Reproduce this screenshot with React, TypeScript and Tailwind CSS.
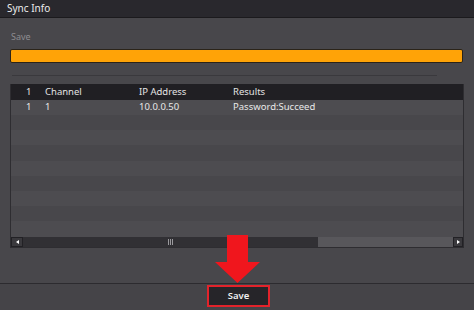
import React from 'react';

const rows = [
  { idx: '1', channel: '1', ip: '10.0.0.50', result: 'Password:Succeed' },
];

const EMPTY_ROWS = 8;

export default function App() {
  return (
    <div
      className="relative w-[474px] h-[310px] bg-[#48474b] flex flex-col overflow-hidden"
      style={{ fontFamily: '"Noto Sans", "Open Sans", sans-serif' }}
    >
      {/* title bar */}
      <div className="h-[18px] bg-[#29282d] border-b border-[#1b1a1d] pl-[7px] text-[10px] leading-[17px] text-[#ececec]">
        Sync Info
      </div>

      <div className="flex-1 flex flex-col px-[10px]">
        <div className="mt-[12px] h-[13px] pl-[1px] text-[9px] leading-[13px] text-[#8e8d91]">Save</div>

        {/* progress */}
        <div className="mt-[6px] w-[453px] h-[14px] rounded-[2px] border border-[#2b2419] bg-[#ffa307]" />

        <div className="mt-[12px] ml-[2px] w-[425px] h-px bg-[#3a393d]" />

        {/* table */}
        <div className="mt-[8px] w-[454px] border-x border-b border-[#2e2d31] flex flex-col">
          <div className="h-[16px] bg-[#201f23] flex items-center text-[9.5px] text-[#e4e4e4]">
            <span className="w-[34px] pl-[15px]">1</span>
            <span className="w-[94px]">Channel</span>
            <span className="w-[94px]">IP Address</span>
            <span>Results</span>
          </div>
          {rows.map((r) => (
            <div key={r.idx} className="h-[15px] bg-[#4d4c50] flex items-center text-[9.5px] text-[#e8e8e8]">
              <span className="w-[34px] pl-[15px]">{r.idx}</span>
              <span className="w-[94px]">{r.channel}</span>
              <span className="w-[94px]">{r.ip}</span>
              <span>{r.result}</span>
            </div>
          ))}
          {Array.from({ length: EMPTY_ROWS }).map((_, i) => (
            <div key={i} className={`h-[15.2px] ${i % 2 === 0 ? 'bg-[#48474b]' : 'bg-[#4d4c50]'}`} />
          ))}
          {/* horizontal scrollbar */}
          <div className="h-[10px] flex bg-[#2a292d]">
            <div className="w-[12px] flex items-center justify-center bg-[#3a393d] border border-[#222125]">
              <div className="w-0 h-0 border-y-[2px] border-y-transparent border-r-[3px] border-r-white" />
            </div>
            <div className="w-[295px] bg-[#313034] flex items-center justify-center gap-[1px]">
              <div className="w-px h-[6px] bg-[#9a999d]" />
              <div className="w-px h-[6px] bg-[#9a999d]" />
              <div className="w-px h-[6px] bg-[#9a999d]" />
            </div>
            <div className="flex-1 bg-[#58575b]" />
            <div className="w-[10px] flex items-center justify-center bg-[#3a393d] border border-[#222125]">
              <div className="w-0 h-0 border-y-[2px] border-y-transparent border-l-[3px] border-l-white" />
            </div>
          </div>
        </div>
      </div>

      {/* footer */}
      <div className="h-[27px] border-t border-[#2c2b2f] bg-[#454448] flex items-start justify-center pt-[1px]">
        <div className="ml-[3px] w-[63px] h-[22px] border-2 border-[#e3232b] bg-[#262529] flex items-center justify-center text-[9.5px] font-semibold text-[#f0f0f0]">
          Save
        </div>
      </div>

      {/* annotation arrow */}
      <svg className="absolute left-[215px] top-[235px]" width="46" height="49" viewBox="0 0 46 49">
        <polygon points="12,0 33,0 33,27 45,27 22.5,48 0,27 12,27" fill="#f0161d" />
      </svg>
    </div>
  );
}
